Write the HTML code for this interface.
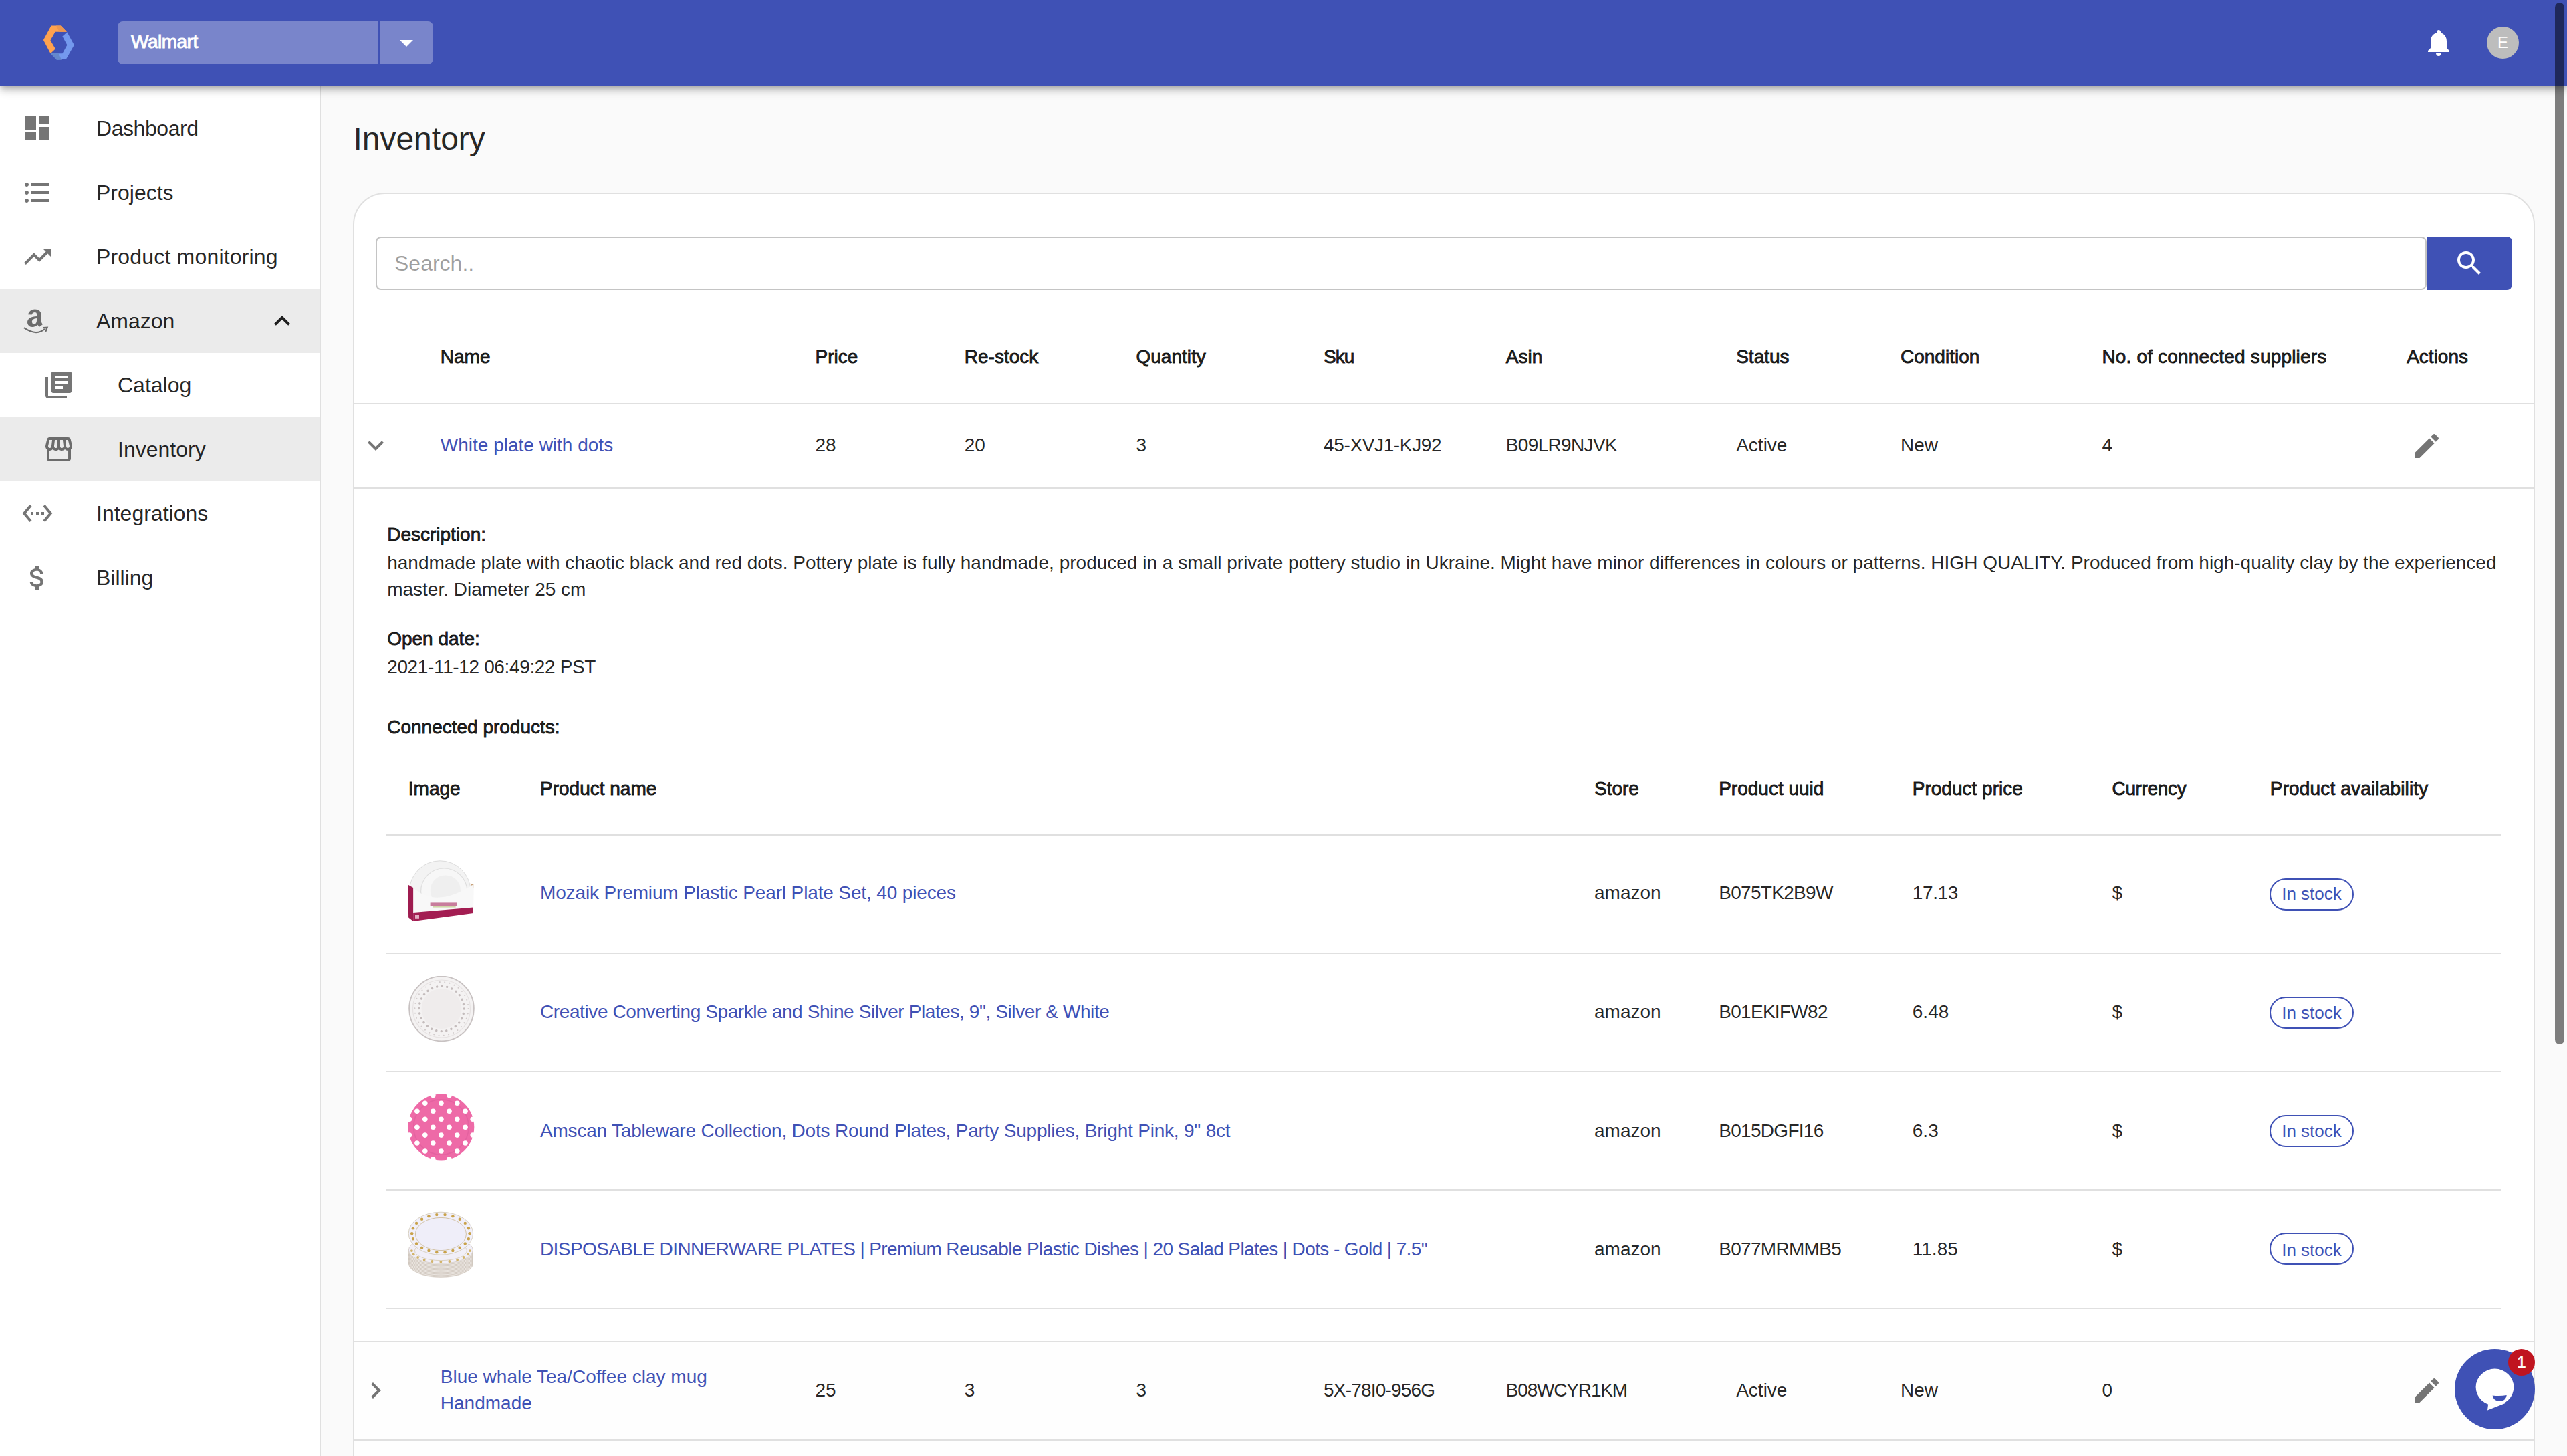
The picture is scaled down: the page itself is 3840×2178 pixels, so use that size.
<!DOCTYPE html>
<html>
<head>
<meta charset="utf-8">
<style>
@media (min-width:2500px){html{zoom:2}}
*{box-sizing:border-box;margin:0;padding:0}
body{width:1920px;height:1089px;overflow:hidden;background:#fafafa;font-family:"Liberation Sans",sans-serif;color:rgba(0,0,0,0.87);position:relative}
.a{position:absolute;white-space:nowrap;line-height:1}
.f14{font-size:14px}
.f16{font-size:16px}
.md{-webkit-text-stroke:0.45px currentColor}
.lk{color:#3f51b5}
.ic{position:absolute;width:24px;height:24px;fill:rgba(0,0,0,0.54)}
.hl{position:absolute;height:1px;background:#e0e0e0}
#hdr{position:absolute;left:0;top:0;width:1920px;height:64px;background:#3f51b5;z-index:5;box-shadow:0 2px 4px -1px rgba(0,0,0,.2),0 4px 5px 0 rgba(0,0,0,.14),0 1px 10px 0 rgba(0,0,0,.12)}
#side{position:absolute;left:0;top:0;width:240px;height:1089px;background:#fff;border-right:1px solid #e0e0e0;z-index:1}
.sel{position:absolute;left:0;width:239px;height:48px;background:#ebebeb}
#card{position:absolute;left:264px;top:144px;width:1632px;height:1100px;background:#fff;border:1px solid #e0e0e0;border-radius:24px}
#sb{position:absolute;left:1911px;top:2px;width:7px;height:779px;border-radius:4px;background:rgba(0,0,0,0.5);z-index:10}
</style>
</head>
<body>
<div id="hdr">
  <svg style="position:absolute;left:28px;top:15px" width="32" height="34" viewBox="0 0 64 68">
    <path fill="#ffa24f" d="M20.6 8.4 L34.8 8.4 L43.9 17.8 L26.6 17.8 L19.4 30.4 L26.9 43.2 L19.6 50.2 L8.9 29.9 Z"/>
    <path fill="#ec9650" d="M28 8.4 L34.8 8.4 L43.9 17.8 L32.7 17.8 Z"/>
    <path fill="#7499ee" d="M44.4 18.2 L54.9 37.4 L43 58.4 L29 59.8 L19.9 50.2 L37.4 50.2 L44.4 37.4 L37.4 24.5 Z"/>
    <path fill="#6587cc" d="M19.9 50.2 L31.8 50.2 L36 59.8 L29 59.8 Z"/>
  </svg>
  <div style="position:absolute;left:88px;top:16px;width:236px;height:32px;border-radius:4px;background:rgba(255,255,255,0.3)"></div>
  <div style="position:absolute;left:283px;top:16px;width:1px;height:32px;background:#3f51b5"></div>
  <div class="a f14 md" style="left:98px;top:24.4px;color:#fff;letter-spacing:-0.25px">Walmart</div>
  <svg class="ic" style="left:292px;top:20px;fill:#fff" viewBox="0 0 24 24"><path d="M7 10l5 5 5-5z"/></svg>
  <svg class="ic" style="left:1812px;top:20px;fill:#fff" viewBox="0 0 24 24"><path d="M12 22c1.1 0 2-.9 2-2h-4c0 1.1.89 2 2 2zm6-6v-5c0-3.07-1.64-5.64-4.5-6.32V4c0-.83-.67-1.5-1.5-1.5s-1.5.67-1.5 1.5v.68C7.63 5.36 6 7.92 6 11v5l-2 2v1h16v-1l-2-2z"/></svg>
  <div style="position:absolute;left:1860px;top:20px;width:24px;height:24px;border-radius:50%;background:#bdbdbd;color:#fff;font-size:12px;line-height:24px;text-align:center">E</div>
</div>

<div id="side">
  <div class="sel" style="top:216px"></div>
  <div class="sel" style="top:312px"></div>
  <svg class="ic" style="left:16px;top:84px" viewBox="0 0 24 24"><path d="M3 13h8V3H3v10zm0 8h8v-6H3v6zm10 0h8V11h-8v10zm0-18v6h8V3h-8z"/></svg>
  <div class="a f16" style="letter-spacing:-0.22px;left:72px;top:88px">Dashboard</div>
  <svg class="ic" style="left:16px;top:132px" viewBox="0 0 24 24"><path d="M4 10.5c-.83 0-1.5.67-1.5 1.5s.67 1.5 1.5 1.5 1.5-.67 1.5-1.5-.67-1.5-1.5-1.5zm0-6c-.83 0-1.5.67-1.5 1.5S3.17 7.5 4 7.5 5.5 6.83 5.5 6 4.83 4.5 4 4.5zm0 12c-.83 0-1.5.68-1.5 1.5s.68 1.5 1.5 1.5 1.5-.68 1.5-1.5-.67-1.5-1.5-1.5zM7 19h14v-2H7v2zm0-6h14v-2H7v2zm0-8v2h14V5H7z"/></svg>
  <div class="a f16" style="left:72px;top:136px">Projects</div>
  <svg class="ic" style="left:16px;top:180px" viewBox="0 0 24 24"><path d="M16 6l2.29 2.29-4.88 4.88-4-4L2 16.59 3.41 18l6-6 4 4 6.3-6.29L22 12V6z"/></svg>
  <div class="a f16" style="letter-spacing:0.09px;left:72px;top:184px">Product monitoring</div>
  <svg class="ic" style="left:16px;top:228px" viewBox="0 0 24 24">
    <path fill-rule="evenodd" d="M5.06 7.1C5.6 4.6 7.7 3.2 10.1 3.2C13 3.2 14.8 4.8 14.8 7.3L14.85 12.6L15.9 14.6L13.5 16.4L12.1 14.9C11.2 15.9 9.9 16.5 8.2 16.5C5.9 16.5 4.5 14.9 4.5 12.9C4.5 10.2 7.3 8.6 11.6 8.5L11.5 6.8C11.5 5.9 10.9 5.5 10.1 5.5C9 5.5 8.1 6.2 7.85 7.3ZM11.5 10C9.3 10.2 7.95 11.2 7.95 12.5C7.95 13.6 8.6 14.4 9.5 14.4C10.7 14.4 11.5 13.2 11.5 11.5Z"/>
    <path d="M1.97 17.1Q11.1 23.45 17.5 18" fill="none" stroke="rgba(0,0,0,0.54)" stroke-width="1.1"/>
    <path d="M16.4 17.1L19.3 16.9L18.15 19.9" fill="none" stroke="rgba(0,0,0,0.54)" stroke-width="1.1"/>
  </svg>
  <div class="a f16" style="left:72px;top:232px">Amazon</div>
  <svg class="ic" style="left:199px;top:228px;fill:rgba(0,0,0,0.87)" viewBox="0 0 24 24"><path d="M12 8l-6 6 1.41 1.41L12 10.83l4.59 4.58L18 14z"/></svg>
  <svg class="ic" style="left:32px;top:276px" viewBox="0 0 24 24"><path d="M4 6H2v14c0 1.1.9 2 2 2h14v-2H4V6zm16-4H8c-1.1 0-2 .9-2 2v12c0 1.1.9 2 2 2h12c1.1 0 2-.9 2-2V4c0-1.1-.9-2-2-2zm-1 9H9V9h10v2zm-4 4H9v-2h6v2zm4-8H9V5h10v2z"/></svg>
  <div class="a f16" style="left:88px;top:280px">Catalog</div>
  <svg class="ic" style="left:32px;top:324px" viewBox="0 0 24 24"><path d="M21.9 8.89l-1.05-4.37c-.22-.9-1-1.52-1.91-1.52H5.05c-.9 0-1.69.63-1.9 1.52L2.1 8.89c-.24 1.02-.02 2.06.62 2.88.08.11.19.19.28.29V19c0 1.1.9 2 2 2h14c1.1 0 2-.9 2-2v-6.94c.09-.09.2-.18.28-.28.64-.82.87-1.87.62-2.89zm-2.99-3.9l1.05 4.37c.1.42.01.84-.25 1.17-.14.18-.44.47-.94.47-.61 0-1.14-.49-1.21-1.14L16.98 5l1.93-.01zM13 5h1.96l.54 4.52c.05.39-.07.78-.33 1.07-.22.26-.54.41-.95.41-.67 0-1.22-.59-1.22-1.31V5zM8.49 9.52L9.04 5H11v4.69c0 .72-.55 1.31-1.29 1.31-.34 0-.65-.15-.89-.41-.25-.29-.37-.68-.33-1.07zm-4.45-.16L5.05 5h1.97l-.58 4.86c-.08.65-.6 1.140-1.21 1.14-.49 0-.8-.29-.93-.47-.27-.32-.36-.75-.26-1.17zM5 19v-6.03c.08.01.15.03.23.03.87 0 1.66-.36 2.24-.95.6.6 1.4.95 2.31.95.87 0 1.65-.36 2.23-.93.59.57 1.39.93 2.29.93.84 0 1.64-.35 2.24-.95.58.59 1.37.95 2.24.95.08 0 .15-.02.23-.03V19H5z"/></svg>
  <div class="a f16" style="left:88px;top:328px">Inventory</div>
  <svg class="ic" style="left:16px;top:372px" viewBox="0 0 24 24"><path d="M7.77 6.76L6.23 5.48.82 12l5.41 6.52 1.54-1.28L3.42 12l4.35-5.24zM7 13h2v-2H7v2zm10-2h-2v2h2v-2zm-6 2h2v-2h-2v2zm6.77-7.52l-1.54 1.28L20.58 12l-4.350 5.24 1.54 1.28L23.18 12l-5.41-6.52z"/></svg>
  <div class="a f16" style="left:72px;top:376px">Integrations</div>
  <svg class="ic" style="left:16px;top:420px" viewBox="0 0 24 24"><path d="M11.8 10.9c-2.27-.59-3-1.2-3-2.15 0-1.09 1.01-1.85 2.7-1.85 1.78 0 2.44.85 2.5 2.1h2.21c-.07-1.72-1.12-3.3-3.21-3.81V3h-3v2.16c-1.94.42-3.5 1.68-3.5 3.61 0 2.31 1.91 3.46 4.7 4.13 2.5.6 3 1.48 3 2.41 0 .69-.49 1.790-2.7 1.79-2.06 0-2.87-.92-2.98-2.1h-2.2c.12 2.19 1.76 3.42 3.7 3.83V21h3v-2.15c1.95-.37 3.5-1.5 3.5-3.55 0-2.84-2.43-3.81-4.7-4.4z"/></svg>
  <div class="a f16" style="left:72px;top:424px">Billing</div>
</div>

<div class="a" style="left:264.2px;top:91.8px;font-size:24px">Inventory</div>

<div id="card">
</div>

<div style="position:absolute;left:281px;top:177px;width:1534px;height:40px;border:1px solid rgba(0,0,0,0.23);border-radius:4px;background:#fff"></div>
<div class="a f16" style="left:295px;top:188.9px;color:rgba(0,0,0,0.38)">Search..</div>
<div style="position:absolute;left:1815px;top:177px;width:64px;height:40px;border-radius:0 4px 4px 0;background:#3f51b5"></div>
<svg class="ic" style="left:1835px;top:185px;fill:#fff" viewBox="0 0 24 24"><path d="M15.5 14h-.79l-.28-.27C15.41 12.59 16 11.11 16 9.5 16 5.91 13.09 3 9.5 3S3 5.91 3 9.5 5.91 16 9.5 16c1.610 0 3.09-.59 4.23-1.57l.27.28v.79l5 4.99L20.49 19l-4.99-5zm-6 0C7.01 14 5 11.99 5 9.5S7.01 5 9.5 5 14 7.01 14 9.5 11.99 14 9.5 14z"/></svg>

<div class="a f14 md" style="left:329.4px;top:260px">Name</div>
<div class="a f14 md" style="left:609.75px;top:260px">Price</div>
<div class="a f14 md" style="left:721.4px;top:260px">Re-stock</div>
<div class="a f14 md" style="left:849.75px;top:260px">Quantity</div>
<div class="a f14 md" style="letter-spacing:-0.5px;left:990px;top:260px">Sku</div>
<div class="a f14 md" style="left:1126.4px;top:260px">Asin</div>
<div class="a f14 md" style="left:1298.6px;top:260px">Status</div>
<div class="a f14 md" style="left:1421.5px;top:260px">Condition</div>
<div class="a f14 md" style="letter-spacing:0.085px;left:1572.2px;top:260px">No. of connected suppliers</div>
<div class="a f14 md" style="left:1800.1px;top:260px">Actions</div>
<div class="hl" style="left:265px;top:301.5px;width:1630px"></div>

<svg class="ic" style="left:269px;top:321.2px" viewBox="0 0 24 24"><path d="M7.41 8.59L12 13.17l4.59-4.58L18 10l-6 6-6-6 1.41-1.41z"/></svg>
<div class="a f14 lk" style="left:329.4px;top:325.9px">White plate with dots</div>
<div class="a f14" style="left:609.75px;top:325.9px">28</div>
<div class="a f14" style="left:721.4px;top:325.9px">20</div>
<div class="a f14" style="left:849.75px;top:325.9px">3</div>
<div class="a f14" style="letter-spacing:-0.18px;left:990px;top:325.9px">45-XVJ1-KJ92</div>
<div class="a f14" style="letter-spacing:-0.33px;left:1126.4px;top:325.9px">B09LR9NJVK</div>
<div class="a f14" style="left:1298.6px;top:325.9px">Active</div>
<div class="a f14" style="left:1421.5px;top:325.9px">New</div>
<div class="a f14" style="left:1572.2px;top:325.9px">4</div>
<svg class="ic" style="left:1803px;top:321.4px" viewBox="0 0 24 24"><path d="M3 17.25V21h3.75L17.81 9.94l-3.75-3.75L3 17.25zM20.71 7.04c.39-.39.39-1.02 0-1.41l-2.34-2.34c-.39-.39-1.02-.39-1.41 0l-1.83 1.83 3.75 3.75 1.83-1.83z"/></svg>
<div class="hl" style="left:265px;top:364.5px;width:1630px"></div>

<div class="a f14 md" style="left:289.6px;top:393.15px">Description:</div>
<div class="a f14" style="left:289.6px;top:414.15px">handmade plate with chaotic black and red dots. Pottery plate is fully handmade, produced in a small private pottery studio in Ukraine. Might have minor differences in colours or patterns. HIGH QUALITY. Produced from high-quality clay by the experienced</div>
<div class="a f14" style="left:289.6px;top:434.15px">master. Diameter 25 cm</div>
<div class="a f14 md" style="left:289.6px;top:471.05px">Open date:</div>
<div class="a f14" style="letter-spacing:-0.18px;left:289.6px;top:491.9px">2021-11-12 06:49:22 PST</div>
<div class="a f14 md" style="left:289.6px;top:536.9px">Connected products:</div>

<div class="a f14 md" style="left:305.4px;top:582.75px">Image</div>
<div class="a f14 md" style="left:404px;top:582.75px">Product name</div>
<div class="a f14 md" style="left:1192.5px;top:582.75px">Store</div>
<div class="a f14 md" style="left:1285.6px;top:582.75px">Product uuid</div>
<div class="a f14 md" style="left:1430.4px;top:582.75px">Product price</div>
<div class="a f14 md" style="letter-spacing:-0.17px;left:1579.75px;top:582.75px">Currency</div>
<div class="a f14 md" style="letter-spacing:0.08px;left:1697.9px;top:582.75px">Product availability</div>
<div class="hl" style="left:289px;top:624px;width:1582px"></div>
<svg style="position:absolute;left:305px;top:642px" width="50" height="50" viewBox="0 0 50 50">
<clipPath id="mzc"><rect x="0" y="0" width="50" height="37"/></clipPath>
<g clip-path="url(#mzc)">
<circle cx="24.1" cy="24.8" r="22.9" fill="#f3f3f3" stroke="#dcdcdc" stroke-width="0.5"/>
<circle cx="27.1" cy="24.8" r="17.3" fill="#f7f7f7" stroke="#dedede" stroke-width="0.6"/>
<circle cx="28.2" cy="24" r="11.3" fill="#efefef"/>
</g>
<path fill="#c9a27a" d="M46.7 18.9 L49.4 19.4 L49.2 22.5 Z"/>
<path fill="#f8f8f8" d="M4.06 22.05 Q20.9 37.9 49.4 19.4 L49 41 L4.06 47 Z"/>
<path fill="#9e1b4f" d="M0.15 19.8 L4.06 22.05 L4.06 47 L0.56 44.3 Z"/>
<path fill="#a31d52" d="M4.06 40.5 L49 36.8 L49 41 L4.06 47 Z"/>
<rect x="16.8" y="33.2" width="20.2" height="2.3" fill="#a01850" opacity="0.55"/>
<rect x="18.5" y="35.9" width="17.3" height="0.9" fill="#b5c070" opacity="0.6"/>
<rect x="5.5" y="42.3" width="3" height="2.6" fill="#f0d0dc" opacity="0.8"/>
</svg>
<div class="a f14 lk" style="letter-spacing:-0.07px;left:404px;top:660.90px">Mozaik Premium Plastic Pearl Plate Set, 40 pieces</div>
<div class="a f14" style="left:1192.5px;top:660.90px">amazon</div>
<div class="a f14" style="letter-spacing:-0.35px;left:1285.6px;top:660.90px">B075TK2B9W</div>
<div class="a f14" style="letter-spacing:-0.2px;left:1430.4px;top:660.90px">17.13</div>
<div class="a f14" style="left:1579.75px;top:660.90px">$</div>
<div style="position:absolute;left:1697.5px;top:657.00px;width:63px;height:24px;border:1px solid #3f51b5;border-radius:12px"></div>
<div class="a lk" style="left:1706.6px;top:661.75px;font-size:13px">In stock</div>
<div class="hl" style="left:289px;top:712.5px;width:1582px"></div>
<svg style="position:absolute;left:305px;top:730px" width="50" height="50" viewBox="0 0 50 50">
<circle cx="25.25" cy="24.5" r="24.2" fill="#f4f2f2" stroke="#c8c2c2" stroke-width="0.9"/>
<circle cx="25.25" cy="24.5" r="21.5" fill="none" stroke="#e6e2e2" stroke-width="0.6"/>
<circle cx="25.25" cy="24.5" r="15" fill="#efecec"/>
<circle cx="25.25" cy="24.5" r="16.8" fill="none" stroke="#c4bcbc" stroke-width="1.7" stroke-linecap="round" stroke-dasharray="0.01 3.77"/>
<circle cx="25.25" cy="24.5" r="20" fill="none" stroke="#d2cccc" stroke-width="1" stroke-linecap="round" stroke-dasharray="0.01 3.7"/>
</svg>
<div class="a f14 lk" style="letter-spacing:-0.2px;left:404px;top:750.05px">Creative Converting Sparkle and Shine Silver Plates, 9", Silver &amp; White</div>
<div class="a f14" style="left:1192.5px;top:750.05px">amazon</div>
<div class="a f14" style="letter-spacing:-0.35px;left:1285.6px;top:750.05px">B01EKIFW82</div>
<div class="a f14" style="left:1430.4px;top:750.05px">6.48</div>
<div class="a f14" style="left:1579.75px;top:750.05px">$</div>
<div style="position:absolute;left:1697.5px;top:745.40px;width:63px;height:24px;border:1px solid #3f51b5;border-radius:12px"></div>
<div class="a lk" style="left:1706.6px;top:750.90px;font-size:13px">In stock</div>
<div class="hl" style="left:289px;top:800.9px;width:1582px"></div>
<svg style="position:absolute;left:305px;top:818px" width="50" height="50" viewBox="0 0 50 50">
<circle cx="24.95" cy="25" r="24.7" fill="#ee6aa7"/>
<circle cx="24.95" cy="25" r="20.6" fill="none" stroke="#e462a0" stroke-width="0.8"/>
<circle cx="18.9" cy="1.2" r="1.9" fill="#fff"/><circle cx="31" cy="1.2" r="1.9" fill="#fff"/><circle cx="12.9" cy="7.15" r="1.9" fill="#fff"/><circle cx="24.95" cy="7.15" r="1.9" fill="#fff"/><circle cx="36.9" cy="7.15" r="1.9" fill="#fff"/><circle cx="6.95" cy="13.1" r="1.9" fill="#fff"/><circle cx="18.9" cy="13.1" r="1.9" fill="#fff"/><circle cx="31" cy="13.1" r="1.9" fill="#fff"/><circle cx="43" cy="13.1" r="1.9" fill="#fff"/><circle cx="1.2" cy="19.1" r="1.9" fill="#fff"/><circle cx="12.9" cy="19.1" r="1.9" fill="#fff"/><circle cx="24.95" cy="19.1" r="1.9" fill="#fff"/><circle cx="36.9" cy="19.1" r="1.9" fill="#fff"/><circle cx="48.6" cy="19.1" r="1.9" fill="#fff"/><circle cx="6.95" cy="25.1" r="1.9" fill="#fff"/><circle cx="18.9" cy="25.1" r="1.9" fill="#fff"/><circle cx="31" cy="25.1" r="1.9" fill="#fff"/><circle cx="43" cy="25.1" r="1.9" fill="#fff"/><circle cx="1.2" cy="31.05" r="1.9" fill="#fff"/><circle cx="12.9" cy="31.05" r="1.9" fill="#fff"/><circle cx="24.95" cy="31.05" r="1.9" fill="#fff"/><circle cx="36.9" cy="31.05" r="1.9" fill="#fff"/><circle cx="48.6" cy="31.05" r="1.9" fill="#fff"/><circle cx="6.95" cy="37" r="1.9" fill="#fff"/><circle cx="18.9" cy="37" r="1.9" fill="#fff"/><circle cx="31" cy="37" r="1.9" fill="#fff"/><circle cx="43" cy="37" r="1.9" fill="#fff"/><circle cx="12.9" cy="43" r="1.9" fill="#fff"/><circle cx="24.95" cy="43" r="1.9" fill="#fff"/><circle cx="36.9" cy="43" r="1.9" fill="#fff"/><circle cx="18.9" cy="49" r="1.9" fill="#fff"/><circle cx="31" cy="49" r="1.9" fill="#fff"/></svg>
<div class="a f14 lk" style="letter-spacing:-0.1px;left:404px;top:838.75px">Amscan Tableware Collection, Dots Round Plates, Party Supplies, Bright Pink, 9" 8ct</div>
<div class="a f14" style="left:1192.5px;top:838.75px">amazon</div>
<div class="a f14" style="letter-spacing:-0.35px;left:1285.6px;top:838.75px">B015DGFI16</div>
<div class="a f14" style="left:1430.4px;top:838.75px">6.3</div>
<div class="a f14" style="left:1579.75px;top:838.75px">$</div>
<div style="position:absolute;left:1697.5px;top:833.80px;width:63px;height:24px;border:1px solid #3f51b5;border-radius:12px"></div>
<div class="a lk" style="left:1706.6px;top:839.60px;font-size:13px">In stock</div>
<div class="hl" style="left:289px;top:889.3px;width:1582px"></div>
<svg style="position:absolute;left:305px;top:906px" width="50" height="50" viewBox="0 0 50 50">
<path d="M0.7 29 A24 10 0 0 0 48.7 29 L48.7 39.5 A24 10 0 0 1 0.7 39.5 Z" fill="#ebe6e1"/>
<path d="M0.7 30.0 A24 10 0 0 0 48.7 30.0" fill="none" stroke="#c8beb4" stroke-width="0.35"/><path d="M0.7 31.0 A24 10 0 0 0 48.7 31.0" fill="none" stroke="#c8beb4" stroke-width="0.35"/><path d="M0.7 32.0 A24 10 0 0 0 48.7 32.0" fill="none" stroke="#c8beb4" stroke-width="0.35"/><path d="M0.7 33.0 A24 10 0 0 0 48.7 33.0" fill="none" stroke="#c8beb4" stroke-width="0.35"/><path d="M0.7 34.0 A24 10 0 0 0 48.7 34.0" fill="none" stroke="#c8beb4" stroke-width="0.35"/><path d="M0.7 35.0 A24 10 0 0 0 48.7 35.0" fill="none" stroke="#c8beb4" stroke-width="0.35"/><path d="M0.7 36.0 A24 10 0 0 0 48.7 36.0" fill="none" stroke="#c8beb4" stroke-width="0.35"/><path d="M0.7 37.0 A24 10 0 0 0 48.7 37.0" fill="none" stroke="#c8beb4" stroke-width="0.35"/><path d="M0.7 38.0 A24 10 0 0 0 48.7 38.0" fill="none" stroke="#c8beb4" stroke-width="0.35"/><path d="M0.7 39.0 A24 10 0 0 0 48.7 39.0" fill="none" stroke="#c8beb4" stroke-width="0.35"/>
<ellipse cx="24.7" cy="29" rx="24" ry="10" fill="#f1eff8" stroke="#d0c8c0" stroke-width="0.4"/>
<ellipse cx="24.7" cy="29.5" rx="19.5" ry="7.3" fill="none" stroke="#cdbd9a" stroke-width="0.3"/>
<circle cx="46.46" cy="29.56" r="0.95" fill="#d2b46a"/><circle cx="45.07" cy="32.17" r="0.95" fill="#d2b46a"/><circle cx="41.84" cy="34.50" r="0.95" fill="#d2b46a"/><circle cx="37.07" cy="36.33" r="0.95" fill="#d2b46a"/><circle cx="31.18" cy="37.50" r="0.95" fill="#d2b46a"/><circle cx="24.70" cy="37.90" r="0.95" fill="#d2b46a"/><circle cx="18.22" cy="37.50" r="0.95" fill="#d2b46a"/><circle cx="12.33" cy="36.33" r="0.95" fill="#d2b46a"/><circle cx="7.56" cy="34.50" r="0.95" fill="#d2b46a"/><circle cx="4.33" cy="32.17" r="0.95" fill="#d2b46a"/><circle cx="2.94" cy="29.56" r="0.95" fill="#d2b46a"/>
<ellipse cx="24.7" cy="16.6" rx="24.1" ry="16" fill="#f1f0fa" stroke="#d8d0c0" stroke-width="0.5"/>
<ellipse cx="24.7" cy="17" rx="19" ry="12.3" fill="#efeef9" stroke="#c9b690" stroke-width="0.4"/>
<circle cx="46.30" cy="16.60" r="1.1" fill="#c9a24a"/><circle cx="45.43" cy="20.60" r="1.1" fill="#c9a24a"/><circle cx="42.87" cy="24.28" r="1.1" fill="#c9a24a"/><circle cx="38.84" cy="27.33" r="1.1" fill="#c9a24a"/><circle cx="33.67" cy="29.52" r="1.1" fill="#c9a24a"/><circle cx="27.77" cy="30.66" r="1.1" fill="#c9a24a"/><circle cx="21.63" cy="30.66" r="1.1" fill="#c9a24a"/><circle cx="15.73" cy="29.52" r="1.1" fill="#c9a24a"/><circle cx="10.56" cy="27.33" r="1.1" fill="#c9a24a"/><circle cx="6.53" cy="24.28" r="1.1" fill="#c9a24a"/><circle cx="3.97" cy="20.60" r="1.1" fill="#c9a24a"/><circle cx="3.10" cy="16.60" r="1.1" fill="#c9a24a"/><circle cx="3.97" cy="12.60" r="1.1" fill="#c9a24a"/><circle cx="6.53" cy="8.92" r="1.1" fill="#c9a24a"/><circle cx="10.56" cy="5.87" r="1.1" fill="#c9a24a"/><circle cx="15.73" cy="3.68" r="1.1" fill="#c9a24a"/><circle cx="21.63" cy="2.54" r="1.1" fill="#c9a24a"/><circle cx="27.77" cy="2.54" r="1.1" fill="#c9a24a"/><circle cx="33.67" cy="3.68" r="1.1" fill="#c9a24a"/><circle cx="38.84" cy="5.87" r="1.1" fill="#c9a24a"/><circle cx="42.87" cy="8.92" r="1.1" fill="#c9a24a"/><circle cx="45.43" cy="12.60" r="1.1" fill="#c9a24a"/></svg>
<div class="a f14 lk" style="letter-spacing:-0.3px;left:404px;top:927.45px">DISPOSABLE DINNERWARE PLATES | Premium Reusable Plastic Dishes | 20 Salad Plates | Dots - Gold | 7.5"</div>
<div class="a f14" style="left:1192.5px;top:927.45px">amazon</div>
<div class="a f14" style="letter-spacing:-0.35px;left:1285.6px;top:927.45px">B077MRMMB5</div>
<div class="a f14" style="left:1430.4px;top:927.45px">11.85</div>
<div class="a f14" style="left:1579.75px;top:927.45px">$</div>
<div style="position:absolute;left:1697.5px;top:922.20px;width:63px;height:24px;border:1px solid #3f51b5;border-radius:12px"></div>
<div class="a lk" style="left:1706.6px;top:928.30px;font-size:13px">In stock</div>
<div class="hl" style="left:289px;top:978.2px;width:1582px"></div>
<div style="position:absolute;left:265px;top:1004px;width:1630px;height:90px;background:#fefefe"></div>
<div class="hl" style="left:265px;top:1003px;width:1630px"></div>

<svg class="ic" style="left:269px;top:1028px" viewBox="0 0 24 24"><path d="M8.59 16.59L13.17 12 8.59 7.41 10 6l6 6-6 6-1.41-1.41z"/></svg>
<div class="a f14 lk" style="left:329.4px;top:1022.75px">Blue whale Tea/Coffee clay mug</div>
<div class="a f14 lk" style="left:329.4px;top:1042.55px">Handmade</div>
<div class="a f14" style="left:609.75px;top:1032.75px">25</div>
<div class="a f14" style="left:721.4px;top:1032.75px">3</div>
<div class="a f14" style="left:849.75px;top:1032.75px">3</div>
<div class="a f14" style="letter-spacing:-0.4px;left:990px;top:1032.75px">5X-78I0-956G</div>
<div class="a f14" style="letter-spacing:-0.59px;left:1126.4px;top:1032.75px">B08WCYR1KM</div>
<div class="a f14" style="left:1298.6px;top:1032.75px">Active</div>
<div class="a f14" style="left:1421.5px;top:1032.75px">New</div>
<div class="a f14" style="left:1572.2px;top:1032.75px">0</div>
<svg class="ic" style="left:1803px;top:1028px" viewBox="0 0 24 24"><path d="M3 17.25V21h3.75L17.81 9.94l-3.75-3.75L3 17.25zM20.71 7.04c.39-.39.39-1.02 0-1.41l-2.34-2.34c-.39-.39-1.02-.39-1.41 0l-1.83 1.83 3.75 3.75 1.83-1.83z"/></svg>
<div class="hl" style="left:265px;top:1076.5px;width:1630px"></div>

<div style="position:absolute;left:1836px;top:1009px;width:60px;height:60px;border-radius:50%;background:#3f51b5;z-index:6"></div>
<svg style="position:absolute;left:1836px;top:1009px;z-index:7" width="60" height="60" viewBox="0 0 60 60">
  <ellipse cx="30" cy="28.5" rx="14.2" ry="13.7" fill="#fff"/>
  <path fill="#fff" d="M24.5 45.7 L25.3 39.5 L38.5 40.3 Z"/>
  <path fill="#3f51b5" d="M28.3 34.7 Q33.6 35.5 38.9 34.5 Q38.2 38.9 33.6 38.9 Q29.1 38.9 28.3 34.7 Z"/>
</svg>
<div style="position:absolute;left:1876px;top:1009px;width:20px;height:20px;border-radius:50%;background:#c0141f;color:#fff;font-size:12px;line-height:20px;text-align:center;z-index:8;-webkit-text-stroke:0.3px #fff">1</div>


<div id="sb"></div>
</body>
</html>
